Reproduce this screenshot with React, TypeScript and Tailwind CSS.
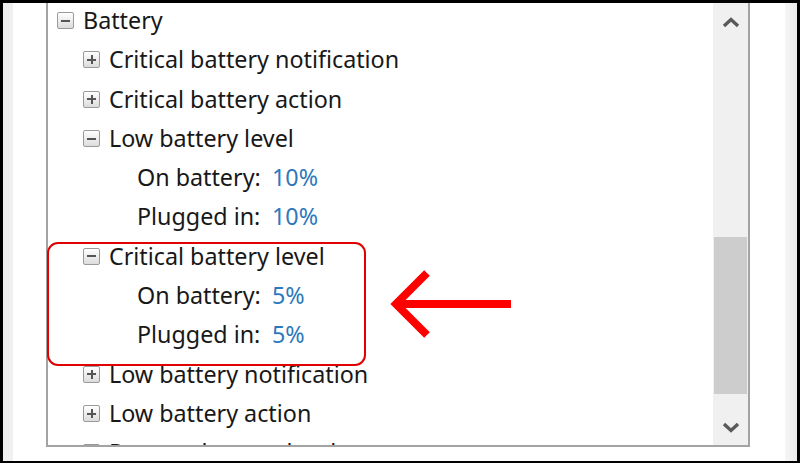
import React from "react";

const FONT = { fontFamily: '"Noto Sans", "Open Sans", sans-serif' };

function Box({ open }: { open: boolean }) {
  return (
    <span className="relative inline-flex w-[17px] h-[17px] shrink-0 items-center justify-center rounded-[2px] border border-[#9a9a9a] bg-gradient-to-b from-white to-[#dcdcdc]">
      <span className="absolute w-[9px] h-[2px] bg-[#555]" />
      {!open && <span className="absolute w-[2px] h-[9px] bg-[#555]" />}
    </span>
  );
}

function Node({ level, open, text }: { level: number; open: boolean; text: string }) {
  return (
    <div className={`flex h-[39.3px] items-center ${level === 0 ? "pl-[9px]" : "pl-[35px]"}`}>
      <Box open={open} />
      <span className="ml-[9px] text-[#181818]">{text}</span>
    </div>
  );
}

function Setting({ label, value }: { label: string; value: string }) {
  return (
    <div className="flex h-[39.3px] items-center pl-[89px]">
      <span className="w-[135px] text-[#181818]">{label}</span>
      <span className="text-[#2d78bb]">{value}</span>
    </div>
  );
}

export default function App() {
  return (
    <div className="relative w-[800px] h-[463px] bg-black pt-[3px] pl-[3px] pr-[3px] pb-[2px]" style={FONT}>
      <div className="flex h-full bg-white">
        <div className="w-[10px] bg-[#f0f0f0]" />
        <div className="w-[33px]" />
        <div className="flex w-[704px] h-[444px] border-l-2 border-r-2 border-b-2 border-[#a3a3a3]">
          <div className="flex-1 overflow-hidden text-[23.3px] leading-none">
            <div className="-mt-[2px]">
              <Node level={0} open text="Battery" />
              <Node level={1} open={false} text="Critical battery notification" />
              <Node level={1} open={false} text="Critical battery action" />
              <Node level={1} open text="Low battery level" />
              <Setting label="On battery:" value="10%" />
              <Setting label="Plugged in:" value="10%" />
              <Node level={1} open text="Critical battery level" />
              <Setting label="On battery:" value="5%" />
              <Setting label="Plugged in:" value="5%" />
              <Node level={1} open={false} text="Low battery notification" />
              <Node level={1} open={false} text="Low battery action" />
              <Node level={1} open text="Reserve battery level" />
            </div>
          </div>
          <div className="flex w-[35px] flex-col bg-[#f0f0f0]">
            <div className="flex h-[38px] items-center justify-center">
              <svg width="18" height="11" viewBox="0 0 18 11">
                <path d="M2 9 L9 2.5 L16 9" fill="none" stroke="#5a5a5a" strokeWidth="3.4" />
              </svg>
            </div>
            <div className="h-[196px]" />
            <div className="mx-[1px] h-[157px] bg-[#cdcdcd]" />
            <div className="flex-1" />
            <div className="flex h-[36px] items-center justify-center">
              <svg width="18" height="11" viewBox="0 0 18 11">
                <path d="M2 2 L9 8.5 L16 2" fill="none" stroke="#5a5a5a" strokeWidth="3.4" />
              </svg>
            </div>
          </div>
        </div>
        <div className="w-[35px]" />
        <div className="w-[12px] bg-gradient-to-r from-[#f6f6f6] to-[#ececec]" />
      </div>

      <div className="absolute left-[47px] top-[242px] w-[319px] h-[124px] rounded-[11px] border-2 border-[#e00000]" />
      <svg className="absolute left-[380px] top-[262px]" width="140" height="84" viewBox="380 262 140 84">
        <path d="M511 304 L395 304" stroke="#ff0000" strokeWidth="8" fill="none" />
        <path d="M427 273 L396 304 L427 335" stroke="#ff0000" strokeWidth="8" fill="none" strokeLinecap="butt" />
      </svg>
    </div>
  );
}
